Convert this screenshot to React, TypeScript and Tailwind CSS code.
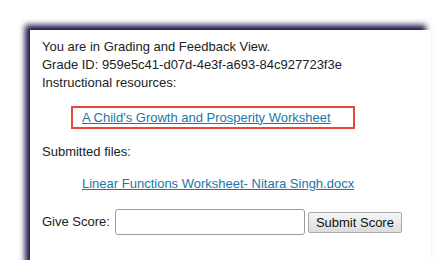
import React from "react";

export default function App() {
  return (
    <div className="w-[437px] h-[260px] bg-white overflow-hidden pt-[30px] pl-[30px] font-['Liberation_Sans',Arial,sans-serif] text-[13px] text-[#222]">
      <div className="w-[401px] h-[240px] bg-white shadow-[-5px_-5px_6px_#1d1948] pl-[12px] pt-[8px]">
        <div className="leading-[18px]">
          <div>You are in Grading and Feedback View.</div>
          <div>Grade ID: 959e5c41-d07d-4e3f-a693-84c927723f3e</div>
          <div>Instructional resources:</div>
        </div>
        <div className="mt-[14px] ml-[29px] w-[284px] h-[23px] border-2 border-[#e8473d] pl-[9px] flex items-center">
          <a href="#" className="text-[#1b76ab] underline leading-[18px]">
            A Child's Growth and Prosperity Worksheet
          </a>
        </div>
        <div className="mt-[14px] leading-[18px]">Submitted files:</div>
        <div className="mt-[14px] ml-[40px] leading-[18px]">
          <a href="#" className="text-[#1b76ab] underline">
            Linear Functions Worksheet- Nitara Singh.docx
          </a>
        </div>
        <div className="mt-[16px] flex items-center">
          <span className="leading-[18px]">Give Score:</span>
          <input
            type="text"
            className="ml-[5px] w-[190px] h-[26px] border border-[#9a9a9a] rounded-[3px] bg-white outline-none"
          />
          <button className="ml-[3px] w-[94px] h-[21px] border border-[#a9a9a9] rounded-[2px] bg-gradient-to-b from-[#f6f6f6] to-[#dcdcdc] text-[13px] text-[#111] leading-none font-['Liberation_Sans',Arial,sans-serif]">
            Submit Score
          </button>
        </div>
      </div>
    </div>
  );
}
